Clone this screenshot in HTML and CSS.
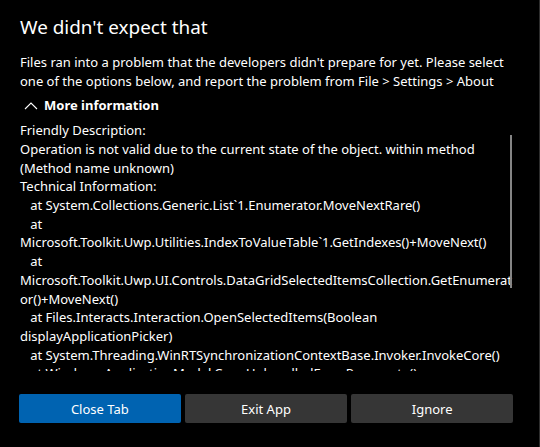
FILE: index.html
```html
<!DOCTYPE html>
<html lang="en">
<head>
    <meta charset="UTF-8">
    <meta name="viewport" content="width=device-width, initial-scale=1.0">
    <title>We didn't expect that</title>
    <link rel="stylesheet" href="styles.css">
</head>
<body>
    <div class="dialog">
        <h1 class="title">We didn't expect that</h1>
        <p class="message">Files ran into a problem that the developers didn't prepare for yet. Please select one of the options below, and report the problem from File &gt; Settings &gt; About</p>

        <div class="expander">
            <svg class="chevron" width="14" height="9" viewBox="0 0 14 9">
                <polyline points="1,8 7,2 13,8" fill="none" stroke="#fff" stroke-width="1.1"/>
            </svg>
            <span>More information</span>
        </div>

        <div class="details">
<div class="details-text">Friendly Description:
Operation is not valid due to the current state of the object. within method
(Method name unknown)
Technical Information:
   at System.Collections.Generic.List`1.Enumerator.MoveNextRare()
   at
Microsoft.Toolkit.Uwp.Utilities.IndexToValueTable`1.GetIndexes()+MoveNext()
   at
Microsoft.Toolkit.Uwp.UI.Controls.DataGridSelectedItemsCollection.GetEnumerat
or()+MoveNext()
   at Files.Interacts.Interaction.OpenSelectedItems(Boolean
displayApplicationPicker)
   at System.Threading.WinRTSynchronizationContextBase.Invoker.InvokeCore()
   at Windows.ApplicationModel.Core.UnhandledError.Propagate()</div>
            <div class="scroll-thumb"></div>
        </div>

        <div class="actions">
            <button class="primary">Close Tab</button>
            <button>Exit App</button>
            <button>Ignore</button>
        </div>
    </div>
</body>
</html>
```

FILE: styles.css
```css
html, body {
    margin: 0;
    padding: 0;
    background-color: #000;
}
body {
    color: #fff;
    font-family: "Noto Sans", "Open Sans", sans-serif;
    font-size: 13px;
}
.dialog {
    box-sizing: border-box;
    width: 540px;
    height: 447px;
    padding: 13px 26px 0 19px;
    border-right: 1px solid #2e2e2e;
    display: flex;
    flex-direction: column;
}
.title {
    margin: 0;
    font-size: 18.9px;
    font-weight: normal;
    line-height: 28px;
    padding-left: 1px;
}
.message {
    margin: 12px 0 0;
    padding-left: 1px;
    line-height: 18.6px;
}
.expander {
    display: flex;
    align-items: center;
    height: 18px;
    margin-top: 6px;
    padding-left: 5px;
    font-weight: bold;
}
.chevron {
    margin-right: 6px;
}
.details {
    position: relative;
    height: 250px;
    margin-top: 7px;
    overflow: hidden;
}
.details-text {
    white-space: pre;
    line-height: 18.7px;
    padding-left: 1px;
    width: 494px;
    overflow: hidden;
}
.scroll-thumb {
    position: absolute;
    left: 491px;
    top: 14px;
    width: 2px;
    height: 153px;
    background-color: #858585;
}
.actions {
    display: flex;
    gap: 4.5px;
    margin-top: 23px;
}
.actions button {
    flex: 1;
    height: 29px;
    border: none;
    border-radius: 2px;
    background-color: #363636;
    color: #fff;
    font-family: inherit;
    font-size: 13px;
    cursor: pointer;
}
.actions button.primary {
    background-color: #0063b1;
}
.actions button:hover {
    background-color: #4a4a4a;
}
.actions button.primary:hover {
    background-color: #0078d7;
}
```
